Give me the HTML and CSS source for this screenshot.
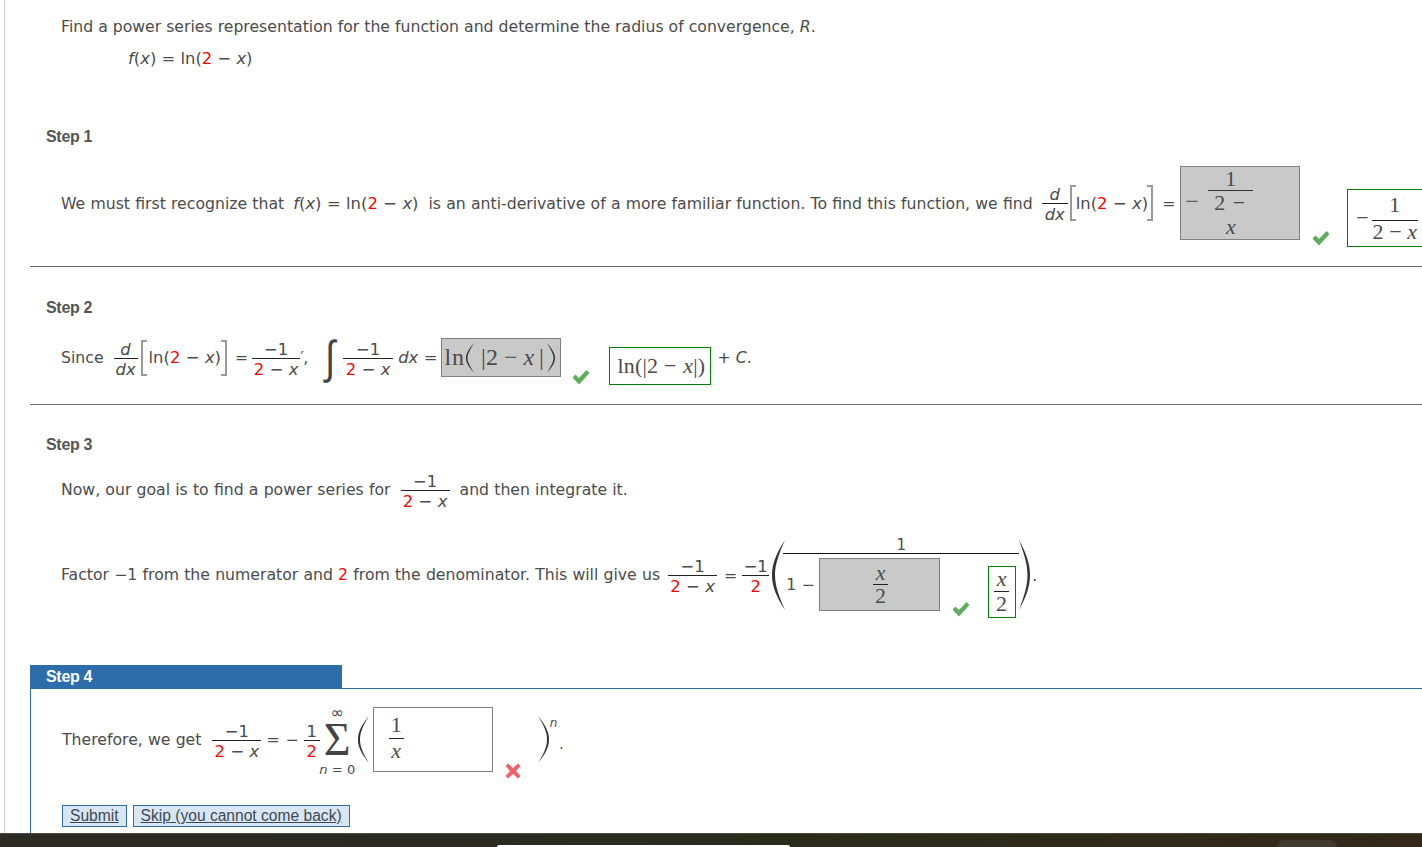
FILE: index.html
```html
<!DOCTYPE html>
<html lang="en">
<head>
<meta charset="utf-8">
<title>Power series</title>
<link rel="stylesheet" href="styles.css">
</head>
<body>
<div class="page">
  <main class="main">
    <p class="q-text">Find a power series representation for the function and determine the radius of convergence, <i>R</i>.</p>
    <p class="q-formula m"><i>f</i>(<i>x</i>) = ln(<span class="red">2</span> − <i>x</i>)</p>

    <h2 class="step-label first">Step 1</h2>
    <div class="row row-s1">
      <span>We must first recognize that</span>
      <span class="ml9 m"><i>f</i>(<i>x</i>) = ln(<span class="red">2</span> − <i>x</i>)</span>
      <span class="ml10">is an anti-derivative of a more familiar function. To find this function, we find</span>
      <span class="frac ml9 w26"><span class="num"><i>d</i></span><span class="den"><i>dx</i></span></span>
      <span class="brk brk-l ml2"></span>
      <span class="m">ln(<span class="red">2</span> − <i>x</i>)</span>
      <span class="brk brk-r mln1"></span>
      <span class="eq ml9">=</span>
      <div class="box box-gray box-s1">
        <span class="serif minus-a">−</span>
        <span class="frac-wrap serif">
          <span class="wrap-num">1</span>
          <span class="wrap-den">2 −</span>
          <span class="wrap-x"><i>x</i></span>
        </span>
      </div>
      <svg class="check check-s1" viewBox="0 0 18 16"><path d="M0.5 8.5 L3.5 5.5 L7 9 L14.500 1 L17.500 4 L7 15.500 Z"/></svg>
      <div class="box box-green box-s1-ans serif">
        <span>−</span>
        <span class="frac frac-serif w46"><span class="num">1</span><span class="den">2 − <i>x</i></span></span>
      </div>
    </div>
    <hr class="rule rule-a">

    <h2 class="step-label second">Step 2</h2>
    <div class="row row-s2">
      <span>Since</span>
      <span class="frac ml10 w24"><span class="num"><i>d</i></span><span class="den"><i>dx</i></span></span>
      <span class="brk brk-l ml3"></span>
      <span class="m ml2">ln(<span class="red">2</span> − <i>x</i>)</span>
      <span class="brk brk-r"></span>
      <span class="eq ml8">=</span>
      <span class="frac ml4 w48"><span class="num">−1</span><span class="den"><span class="red">2</span> − <i>x</i></span></span>
      <span class="prime">′</span>
      <span class="prime">,</span>
      <span class="integral">∫</span>
      <span class="frac ml6 w50"><span class="num">−1</span><span class="den"><span class="red">2</span> − <i>x</i></span></span>
      <span class="dx m"><i>dx</i> =</span>
      <div class="box box-gray box-s2 serif">
        <span class="ln">ln</span>
        <svg class="paren paren-tiny open" viewBox="0 0 8 30"><path d="M8 0 C2 7 0 11 0 15 C0 19 2 23 8 30 C4 23 1.500 19 1.500 15 C1.500 11 4 7 8 0Z"/></svg>
        <span class="bar-l">|</span><span class="expr">2 − <i>x</i></span><span class="bar-r">|</span>
        <svg class="paren paren-tiny shut mirror" viewBox="0 0 8 30"><path d="M8 0 C2 7 0 11 0 15 C0 19 2 23 8 30 C4 23 1.500 19 1.500 15 C1.500 11 4 7 8 0Z"/></svg>
      </div>
      <svg class="check check-s2" viewBox="0 0 18 16"><path d="M0.5 8.5 L3.5 5.5 L7 9 L14.500 1 L17.500 4 L7 15.500 Z"/></svg>
      <div class="box box-green box-s2-ans serif"><span>ln(|2 − <i class="x-gap">x</i>|)</span></div>
      <span class="ml6">+ <i>C</i>.</span>
    </div>
    <hr class="rule rule-b">

    <h2 class="step-label third">Step 3</h2>
    <div class="row row-now">
      <span class="lift">Now, our goal is to find a power series for</span>
      <span class="frac ml10 w49"><span class="num">−1</span><span class="den"><span class="red">2</span> − <i>x</i></span></span>
      <span class="ml10 lift">and then integrate it.</span>
    </div>
    <div class="row row-factor">
      <span class="lift">Factor −1 from the numerator and <span class="red">2</span> from the denominator. This will give us</span>
      <span class="frac ml8 w49"><span class="num">−1</span><span class="den"><span class="red">2</span> − <i>x</i></span></span>
      <span class="eq ml7">=</span>
      <span class="frac ml5 w27"><span class="num">−1</span><span class="den"><span class="red">2</span></span></span>
      <svg class="paren paren-big" viewBox="0 0 13 70"><path d="M13 0 C4 14 0 24 0 35 C0 46 4 56 13 70 C7 56 3 46 3 35 C3 24 7 14 13 0Z"/></svg>
      <div class="bigfrac">
        <div class="bigfrac-num">1</div>
        <div class="bigfrac-den">
          <span class="one-minus">1 −</span>
          <div class="box box-gray box-s3 serif">
            <span class="frac frac-serif"><span class="num"><i>x</i></span><span class="den">2</span></span>
          </div>
          <svg class="check check-s3" viewBox="0 0 18 16"><path d="M0.5 8.5 L3.5 5.5 L7 9 L14.500 1 L17.500 4 L7 15.500 Z"/></svg>
          <div class="box box-green box-s3-ans serif">
            <span class="frac frac-serif"><span class="num"><i>x</i></span><span class="den">2</span></span>
          </div>
        </div>
      </div>
      <svg class="paren-big-close mirror" viewBox="0 0 13 70" preserveAspectRatio="none"><path d="M13 0 C4 14 0 24 0 35 C0 46 4 56 13 70 C7 56 3 46 3 35 C3 24 7 14 13 0Z"/></svg>
      <span class="dot">.</span>
    </div>

    <section class="active">
      <h2 class="tab">Step 4</h2>
      <div class="frame">
        <div class="row row-s4">
          <span>Therefore, we get</span>
          <span class="frac ml11 w49"><span class="num">−1</span><span class="den"><span class="red">2</span> − <i>x</i></span></span>
          <span class="eq ml5">=</span>
          <span class="ml6">−</span>
          <span class="frac ml5 w16"><span class="num">1</span><span class="den"><span class="red">2</span></span></span>
          <span class="sum">
            <span class="sum-top">∞</span>
            <span class="sum-sign serif">Σ</span>
            <span class="sum-bot"><i>n</i> = 0</span>
          </span>
          <svg class="paren paren-small" viewBox="0 0 11 47"><path d="M11 0 C3 10 0 16 0 23.500 C0 31 3 37 11 47 C5 37 2 31 2 23.500 C2 16 5 10 11 0Z"/></svg>
          <div class="box box-white serif">
            <span class="frac frac-serif"><span class="num">1</span><span class="den"><i>x</i></span></span>
          </div>
          <svg class="cross" viewBox="0 0 16 16"><path d="M3 0.500 L8 5 L13 0.500 L15.500 3 L11 8 L15.500 13 L13 15.500 L8 11 L3 15.500 L0.500 13 L5 8 L0.500 3 Z"/></svg>
          <svg class="paren paren-small close mirror" viewBox="0 0 11 47"><path d="M11 0 C3 10 0 16 0 23.500 C0 31 3 37 11 47 C5 37 2 31 2 23.500 C2 16 5 10 11 0Z"/></svg>
          <span class="power"><i>n</i></span>
          <span class="dot-s4">.</span>
        </div>
        <div class="actions">
          <a class="btn" href="#">Submit</a>
          <a class="btn" href="#">Skip (you cannot come back)</a>
        </div>
      </div>
    </section>
  </main>
  <footer class="taskbar">
    <span class="pill"></span>
    <span class="tabshape"></span>
  </footer>
</div>
</body>
</html>
```
FILE: styles.css
```css
* { box-sizing: border-box; }
html, body { margin: 0; padding: 0; height: 100%; overflow: hidden; background: #fff; }
body { font-family: "DejaVu Sans", Verdana, sans-serif; font-size: 15.7px; color: #4b4b4b; }
p, h2 { margin: 0; }
.page { display: flex; flex-direction: column; height: 847px; }
.main { flex: 1; display: flex; flex-direction: column; min-height: 0; margin-left: 4px; padding-left: 25px; border-left: 1px solid #d0d0d0; overflow: hidden; }
.red { color: #f00; }
.serif { font-family: "Liberation Serif", "Times New Roman", serif; }
.m { font-size: 16.4px; }
.lift { margin-bottom: 2px; }

.q-text { margin: 16px 0 0 31px; height: 20px; line-height: 22px; white-space: nowrap; }
.q-formula { margin: 12px 0 0 98px; height: 20px; line-height: 22px; }

.step-label { padding-left: 16px; height: 20px; font: bold 16px/21px "Liberation Sans", Arial, sans-serif; letter-spacing: -0.3px; color: #555; }
.step-label.first { margin-top: 58px; }
.step-label.second { margin-top: 30px; }
.step-label.third { margin-top: 29px; }

.row { display: flex; align-items: center; white-space: nowrap; flex: none; word-spacing: 0.2px; }
.row-s1 { margin-top: 20px; padding-left: 31px; height: 74px; }
.row-s2 { margin-top: 21px; padding-left: 31px; height: 39px; }
.row-now { margin-top: 16px; padding-left: 31px; height: 40px; }
.row-factor { margin-top: 30px; padding: 0 0 8px 31px; height: 78px; }
.row-s4 { margin-top: 18px; padding-left: 31px; height: 65px; }

.rule { flex: none; width: 100%; height: 1px; margin: 0; border: 0; background: #6a6a6a; }
.rule-a { margin-top: 26px; }
.rule-b { margin-top: 27px; }

.mln1 { margin-left: -1px; }
.ml2 { margin-left: 2px; } .ml3 { margin-left: 3px; } .ml4 { margin-left: 4px; } .ml5 { margin-left: 5px; }
.ml6 { margin-left: 6px; } .ml7 { margin-left: 7px; } .ml8 { margin-left: 8px; }
.ml9 { margin-left: 9px; } .ml10 { margin-left: 10px; } .ml11 { margin-left: 11px; }
.w16 { width: 16px; } .w24 { width: 24px; } .w26 { width: 26px; } .w27 { width: 27px; }
.w46 { width: 46px; } .w48 { width: 48px; } .w49 { width: 49px; } .w50 { width: 50px; }

.frac { display: inline-flex; flex-direction: column; align-items: center; flex: none; font-size: 16.4px; text-align: center; }
.num { display: block; width: 100%; height: 20px; line-height: 24px; }
.den { display: block; width: 100%; height: 20px; line-height: 22px; border-top: 1px solid #222; }
.frac-serif { font-size: 22px; }

.brk { flex: none; display: block; width: 6px; height: 36px; border: 2px solid #999; }
.brk-l { border-right: 0; }
.brk-r { border-left: 0; }
.eq { flex: none; }
.dx { margin-left: 5px; }

.box { flex: none; display: flex; align-items: center; }
.box-gray { background: #c9c9c9; border: 1px solid #808080; }
.box-green { background: #fff; border: 1px solid #008000; }
.box-white { background: #fff; border: 1px solid #808080; width: 120px; height: 65px; margin-left: 4px; padding-left: 15px; }
.box-white .frac { width: 15px; }
.box-white .num { height: 26px; line-height: 26px; }
.box-white .den { height: 29px; line-height: 24px; }

.box-s1 { width: 120px; height: 74px; margin-left: 5px; font-size: 22px; }
.minus-a { margin: -3px 0 0 4px; width: 14px; font-size: 24px; }
.frac-wrap { display: flex; flex-direction: column; margin-left: 9px; width: 45px; height: 72px; line-height: 24px; }
.wrap-num { height: 24px; text-align: center; border-bottom: 1px solid #333; }
.wrap-den { height: 24px; padding-left: 6px; word-spacing: 2px; }
.wrap-x { height: 24px; text-align: center; }
.box-s1-ans { width: 90px; height: 58px; margin: 0 -7px -7px 17px; padding-left: 8px; font-size: 22px; align-self: flex-end; }
.box-s1-ans .frac { margin-left: 3px; }
.box-s1-ans .num { height: 30px; line-height: 30px; }
.box-s1-ans .den { height: 26px; line-height: 22px; }

.check { flex: none; width: 18px; height: 16px; fill: #5cad5c; }
.check-s1 { align-self: flex-end; margin: 0 0 -6px 12px; }
.check-s2 { align-self: flex-end; margin: 0 0 -8px 11px; }
.check-s3 { margin: 47px 0 0 12px; }

.prime { flex: none; width: 3px; }
.integral { flex: none; width: 13px; margin-left: 18px; font-family: "Liberation Sans", Arial, sans-serif; font-size: 46px; line-height: 39px; height: 39px; color: #444; transform: scaleX(0.8); }

.box-s2 { width: 120px; height: 39px; margin-left: 4px; padding-left: 2px; font-size: 24px; word-spacing: 0; }
.ln { letter-spacing: 1px; }
.paren-tiny { width: 8px; height: 30px; }
.paren-tiny.open { margin-left: 1px; }
.paren-tiny.shut { margin-left: 3px; }
.bar-l { margin-left: 7px; }
.bar-r { margin-left: 5px; }
.box-s2-ans { align-self: flex-end; width: 102px; height: 38px; margin: 0 0 -8px 19px; padding-left: 7px; font-size: 22px; word-spacing: 0; letter-spacing: 0.2px; }
.x-gap { margin-left: 1px; }

.paren { flex: none; fill: #333; }
.paren-big { width: 13px; height: 70px; margin-left: 3px; }
.paren-big-close { flex: none; fill: #333; width: 11px; height: 70px; }
.mirror { transform: scaleX(-1); }
.bigfrac { flex: none; display: flex; flex-direction: column; width: 236px; align-self: flex-start; margin-left: -2px; }
.bigfrac-num { height: 14px; line-height: 10px; text-align: center; border-bottom: 1px solid #111; font-size: 15px; }
.bigfrac-den { display: flex; align-items: flex-start; height: 64px; padding-left: 3px; }
.one-minus { margin: 21px 0 0 0; font-size: 15.7px; }
.box-s3 { justify-content: center; width: 121px; height: 53px; margin: 4px 0 0 4px; padding-left: 3px; }
.box-s3 .frac, .box-s3-ans .frac { width: 15px; }
.box-s3 .num { height: 23px; line-height: 23px; }
.box-s3 .den { height: 25px; line-height: 21px; }
.box-s3-ans { justify-content: center; width: 28px; height: 52px; margin: 12px 0 0 18px; }
.box-s3-ans .num { height: 24px; line-height: 24px; }
.box-s3-ans .den { height: 26px; line-height: 24px; }
.dot { margin-left: 2px; font-size: 16px; color: #333; }

.active { flex: 1; display: flex; flex-direction: column; margin-top: 47px; min-height: 0; }
.tab { flex: none; width: 312px; height: 23px; padding-left: 16px; background: #2e6dab; color: #fff; font: bold 16px/23px "Liberation Sans", Arial, sans-serif; letter-spacing: -0.3px; }
.frame { flex: 1; border-top: 1px solid #2e6dab; border-left: 1px solid #2e6dab; }

.sum { flex: none; position: relative; display: flex; flex-direction: column; align-items: center; width: 27px; margin-left: 4px; }
.sum-sign { font-size: 46px; line-height: 40px; color: #444; }
.sum-top, .sum-bot { position: absolute; left: 50%; transform: translateX(-50%); line-height: 14px; white-space: nowrap; }
.sum-top { top: -14px; font-size: 16px; }
.sum-bot { bottom: -17px; font-size: 13px; }
.paren-small { width: 11px; height: 47px; margin-left: 7px; }
.cross { flex: none; width: 16px; height: 16px; fill: #f4606a; align-self: flex-end; margin: 0 0 -7px 12px; }
.paren-small.close { margin-left: 17px; }
.power { align-self: flex-start; margin: 9px 0 0 1px; font-size: 12px; line-height: 14px; }
.dot-s4 { margin: 8px 0 0 2px; font-size: 14px; color: #333; }

.actions { display: flex; gap: 6px; margin: 33px 0 0 31px; }
.btn { display: block; height: 22px; padding: 0 7px; border: 1px solid #2e6dab; background: #d9e6f2; color: #3d4a55; font: 15.6px/20px "Liberation Sans", Arial, sans-serif; text-decoration: underline; white-space: nowrap; }

.taskbar { flex: none; position: relative; height: 14px; border-top: 1px solid #4a4a42; background: linear-gradient(90deg, #2c2a24 0%, #2b2a22 30%, #292b1a 55%, #2f2a1a 80%, #33281a 100%); }
.pill { position: absolute; left: 497px; bottom: 0; width: 293px; height: 2px; border-radius: 4px 4px 0 0; background: #fff; }
.tabshape { position: absolute; left: 1277px; bottom: 0; width: 60px; height: 7px; border-radius: 7px 7px 0 0; background: #3f3a2c; }
```
